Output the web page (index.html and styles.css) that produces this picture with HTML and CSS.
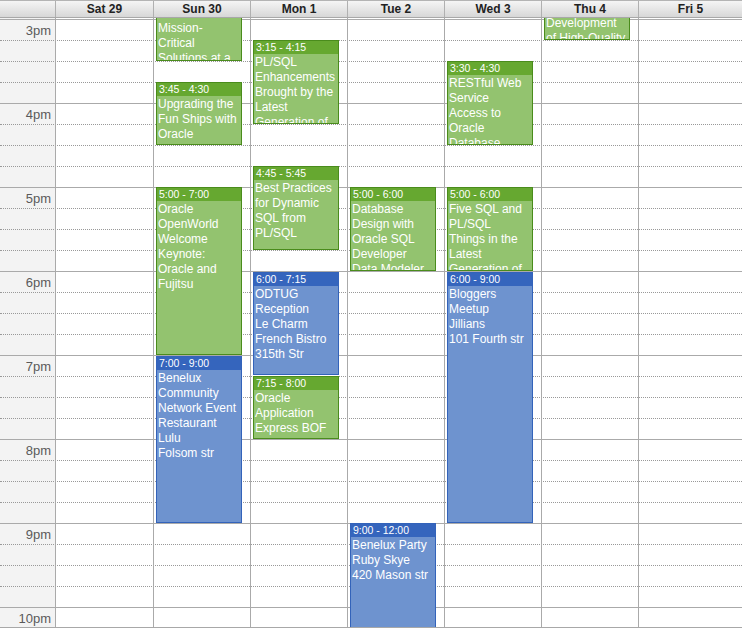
FILE: index.html
```html
<!DOCTYPE html>
<html>
<head>
<meta charset="utf-8">
<title>Week</title>
<link rel="stylesheet" href="styles.css">
</head>
<body>
<div class="cal">
  <div class="head">
    <div class="hc corner"></div>
    <div class="hc">Sat 29</div>
    <div class="hc">Sun 30</div>
    <div class="hc">Mon 1</div>
    <div class="hc">Tue 2</div>
    <div class="hc">Wed 3</div>
    <div class="hc">Thu 4</div>
    <div class="hc">Fri 5</div>
  </div>
  <div class="body">
    <div class="rows">
      <div class="hour"><div class="q"><span class="lbl">3pm</span></div><div class="q dot"></div><div class="q dot"></div><div class="q dot"></div></div>
      <div class="hour"><div class="q"><span class="lbl">4pm</span></div><div class="q dot"></div><div class="q dot"></div><div class="q dot"></div></div>
      <div class="hour"><div class="q"><span class="lbl">5pm</span></div><div class="q dot"></div><div class="q dot"></div><div class="q dot"></div></div>
      <div class="hour"><div class="q"><span class="lbl">6pm</span></div><div class="q dot"></div><div class="q dot"></div><div class="q dot"></div></div>
      <div class="hour"><div class="q"><span class="lbl">7pm</span></div><div class="q dot"></div><div class="q dot"></div><div class="q dot"></div></div>
      <div class="hour"><div class="q"><span class="lbl">8pm</span></div><div class="q dot"></div><div class="q dot"></div><div class="q dot"></div></div>
      <div class="hour"><div class="q"><span class="lbl">9pm</span></div><div class="q dot"></div><div class="q dot"></div><div class="q dot"></div></div>
      <div class="hour"><div class="q"><span class="lbl">10pm</span></div><div class="q dot"></div><div class="q dot"></div><div class="q dot"></div></div>
    </div>
    <div class="cols">
      <div class="tc"></div>
      <div class="day"></div>
      <div class="day">
        <div class="ev green" style="top:-42px;height:85px"><div class="eh">2:30 - 3:30</div><div class="et">Oracle Exadata: Mission-Critical Solutions at a Glance</div></div>
        <div class="ev green" style="top:64px;height:63px"><div class="eh">3:45 - 4:30</div><div class="et">Upgrading the Fun Ships with Oracle</div></div>
        <div class="ev green" style="top:169px;height:168px"><div class="eh">5:00 - 7:00</div><div class="et">Oracle OpenWorld Welcome Keynote: Oracle and Fujitsu</div></div>
        <div class="ev blue" style="top:338px;height:167px"><div class="eh">7:00 - 9:00</div><div class="et">Benelux Community Network Event<br>Restaurant<br>Lulu<br>Folsom str</div></div>
      </div>
      <div class="day">
        <div class="ev green" style="top:22px;height:84px"><div class="eh">3:15 - 4:15</div><div class="et">PL/SQL Enhancements Brought by the Latest Generation of Database Servers</div></div>
        <div class="ev green" style="top:148px;height:84px"><div class="eh">4:45 - 5:45</div><div class="et">Best Practices for Dynamic SQL from PL/SQL</div></div>
        <div class="ev blue" style="top:254px;height:103px"><div class="eh">6:00 - 7:15</div><div class="et">ODTUG Reception<br>Le Charm<br>French Bistro<br>315th Str</div></div>
        <div class="ev green" style="top:358px;height:63px"><div class="eh">7:15 - 8:00</div><div class="et">Oracle Application Express BOF</div></div>
      </div>
      <div class="day">
        <div class="ev green" style="top:169px;height:84px"><div class="eh">5:00 - 6:00</div><div class="et">Database Design with Oracle SQL Developer Data Modeler</div></div>
        <div class="ev blue" style="top:505px;height:252px"><div class="eh">9:00 - 12:00</div><div class="et">Benelux Party<br>Ruby Skye<br>420 Mason str</div></div>
      </div>
      <div class="day">
        <div class="ev green" style="top:43px;height:84px"><div class="eh">3:30 - 4:30</div><div class="et">RESTful Web Service Access to Oracle Database</div></div>
        <div class="ev green" style="top:169px;height:84px"><div class="eh">5:00 - 6:00</div><div class="et">Five SQL and PL/SQL Things in the Latest Generation of Database</div></div>
        <div class="ev blue" style="top:254px;height:251px"><div class="eh">6:00 - 9:00</div><div class="et">Bloggers Meetup<br>Jillians<br>101 Fourth str</div></div>
      </div>
      <div class="day">
        <div class="ev green" style="top:-62px;height:84px"><div class="eh">2:15 - 3:15</div><div class="et">Tips for Using Oracle ADF in the Development of High-Quality Apps</div></div>
      </div>
      <div class="day"></div>
    </div>
  </div>
</div>
</body>
</html>
```
FILE: styles.css
```css
* { box-sizing: border-box; }
html, body { margin: 0; padding: 0; background: #fff; }
body { font-family: "Liberation Sans", Arial, sans-serif; }

.cal { width: 742px; height: 628px; overflow: hidden; }

.head {
  display: grid;
  grid-template-columns: 55px 98px repeat(5, 97px) 1fr;
  height: 18px;
  border-top: 1px solid #b4b4b4;
  border-bottom: 1px solid #a8a8a8;
  background: linear-gradient(#f5f5f5, #d7d7d7);
}
.hc {
  border-left: 1px solid #b0b0b0;
  text-align: center;
  font-size: 12px;
  font-weight: bold;
  line-height: 16px;
  color: #222;
}
.hc.corner { border-left: 0; }

.body {
  position: relative;
  height: 610px;
  overflow: hidden;
  border-bottom: 1px solid #a8a8a8;
  background: linear-gradient(90deg, #f3f3f3 55px, #fff 55px);
}
.rows { margin-top: 1px; }
.q {
  height: 21px;
  border-top: 1px solid #aaa;
}
.q.dot { border-top: 1px dotted #999; }
.lbl {
  display: block;
  width: 55px;
  padding: 1px 4px 0 0;
  text-align: right;
  font-size: 13px;
  line-height: 20px;
  color: #5a5a5a;
}

.cols {
  position: absolute;
  inset: 0;
  display: grid;
  grid-template-columns: 55px 98px repeat(5, 97px) 1fr;
}
.day {
  position: relative;
  border-left: 1px solid #aaa;
}

.ev {
  position: absolute;
  left: 2px;
  width: 86px;
  overflow: hidden;
  border: 1px solid;
  color: #fff;
}
.ev.green { background: #93c36f; border-color: #4a8c1c; }
.ev.green .eh { background: #66a830; }
.ev.blue { background: #6e93cf; border-color: #3363ba; }
.ev.blue .eh { background: #3565bd; }

.eh {
  height: 13px;
  padding-left: 2px;
  font-size: 10.5px;
  line-height: 13px;
  white-space: nowrap;
}
.et {
  padding: 1px 2.7px 0 1px;
  font-size: 12px;
  line-height: 15px;
}
```
